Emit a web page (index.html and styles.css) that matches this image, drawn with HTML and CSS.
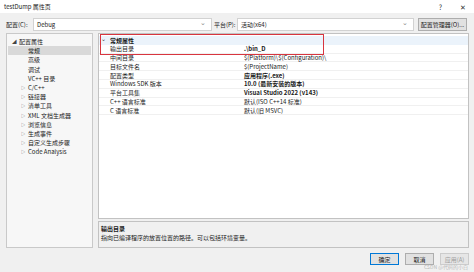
FILE: index.html
```html
<!DOCTYPE html>
<html>
<head>
<meta charset="utf-8">
<link rel="stylesheet" href="styles.css">
</head>
<body>
<div class="win">
  <div class="titlebar">
    <span class="title">testDump 属性页</span>
    <span class="tb-btns"><span class="help">?</span><span class="close">✕</span></span>
  </div>
  <div class="toolbar">
    <span class="lbl">配置(C):</span>
    <div class="combo combo-cfg"><span>Debug</span><span class="arrow">⌄</span></div>
    <span class="lbl lbl-plat">平台(P):</span>
    <div class="combo combo-plat"><span>活动(x64)</span><span class="arrow">⌄</span></div>
    <div class="btn btn-mgr">配置管理器(O)...</div>
  </div>
  <div class="main">
    <div class="tree">
      <div class="node lvl0"><span class="tri open">◢</span>配置属性</div>
      <div class="node lvl1 sel">常规</div>
      <div class="node lvl1">高级</div>
      <div class="node lvl1">调试</div>
      <div class="node lvl1">VC++ 目录</div>
      <div class="node lvl1c"><span class="tri">▷</span>C/C++</div>
      <div class="node lvl1c"><span class="tri">▷</span>链接器</div>
      <div class="node lvl1c"><span class="tri">▷</span>清单工具</div>
      <div class="node lvl1c"><span class="tri">▷</span>XML 文档生成器</div>
      <div class="node lvl1c"><span class="tri">▷</span>浏览信息</div>
      <div class="node lvl1c"><span class="tri">▷</span>生成事件</div>
      <div class="node lvl1c"><span class="tri">▷</span>自定义生成步骤</div>
      <div class="node lvl1c"><span class="tri">▷</span>Code Analysis</div>
    </div>
    <div class="right">
      <div class="grid">
        <div class="row head"><span class="chev">⌄</span><span class="name">常规属性</span></div>
        <div class="row"><span class="name">输出目录</span><span class="val b">.\bin_D</span></div>
        <div class="row"><span class="name">中间目录</span><span class="val">$(Platform)\$(Configuration)\</span></div>
        <div class="row"><span class="name">目标文件名</span><span class="val">$(ProjectName)</span></div>
        <div class="row"><span class="name">配置类型</span><span class="val b">应用程序(.exe)</span></div>
        <div class="row"><span class="name">Windows SDK 版本</span><span class="val b">10.0 (最新安装的版本)</span></div>
        <div class="row"><span class="name">平台工具集</span><span class="val b">Visual Studio 2022 (v143)</span></div>
        <div class="row"><span class="name">C++ 语言标准</span><span class="val">默认(ISO C++14 标准)</span></div>
        <div class="row"><span class="name">C 语言标准</span><span class="val">默认(旧 MSVC)</span></div>
        <div class="redbox"></div>
      </div>
      <div class="desc">
        <div class="desc-title">输出目录</div>
        <div class="desc-text">指向已编译程序的放置位置的路径。可以包括环境变量。</div>
      </div>
    </div>
  </div>
  <div class="footer">
    <div class="btn btn-ok">确定</div>
    <div class="btn">取消</div>
    <div class="btn disabled">应用(A)</div>
    <span class="wm">CSDN @代码的小白</span>
  </div>
</div>
</body>
</html>
```
FILE: styles.css
```css
* { box-sizing: border-box; }
html, body { margin: 0; padding: 0; }
body {
  width: 474px; height: 272px; overflow: hidden;
  background: #f0f0f0;
  font-family: "Noto Sans CJK SC", "Noto Sans", sans-serif;
  font-size: 6px; color: #1a1a1a;
}
.win { width: 474px; height: 272px; display: flex; flex-direction: column; }
.titlebar {
  height: 13px; background: #ffffff; display: flex; align-items: center;
  justify-content: space-between; padding: 0 8px 0 4px;
}
.title { font-size: 6px; color: #222; }
.tb-btns { display: flex; gap: 18px; font-size: 7px; color: #333; }
.toolbar {
  display: flex; align-items: center; height: 14px; margin-top: 4px; padding-left: 6px;
  white-space: nowrap;
}
.lbl { width: 27px; white-space: nowrap; }
.lbl-plat { margin-left: 2px; width: 23px; }
.combo {
  height: 13px; background: #fff; border: 1px solid #d2d2d2;
  display: flex; align-items: center; justify-content: space-between; padding: 0 5px 0 3px;
}
.combo-cfg { width: 179px; }
.combo-plat { width: 177px; }
.arrow { font-size: 7px; color: #888; line-height: 7px; margin-top: -3px; }
.btn {
  height: 13px; background: #e1e1e1; border: 1px solid #adadad;
  display: flex; align-items: center; justify-content: center; font-size: 6px; white-space: nowrap;
}
.btn-mgr { width: 49px; margin-left: 4px; }
.main { display: flex; gap: 5px; margin-top: 2px; padding-left: 6px; height: 215px; }
.tree {
  width: 87px; background: #f7f7f7; border: 1px solid #c9c9c9; padding-top: 3px;
}
.node { height: 9.2px; line-height: 9.2px; white-space: nowrap; display: flex; align-items: center; }
.tri { font-size: 4.5px; width: 7px; color: #555; }
.tri.open { color: #444; }
.lvl0 { padding-left: 5px; }
.lvl1 { padding-left: 21px; }
.lvl1c { padding-left: 14px; }
.sel { background: #d9d9d9; margin: 0 1px; padding-left: 20px; }
.right { width: 371px; display: flex; flex-direction: column; gap: 2px; }
.grid {
  position: relative; height: 186px; background: #fff; border: 1px solid #c2c2c2; padding-top: 2px;
}
.row {
  height: 8.8px; display: flex; align-items: center; border-bottom: 1px solid #f0f0f0; white-space: nowrap;
}
.row.head { background: #ebf3fb; border-bottom: none; }
.chev { width: 11px; padding-left: 2px; font-size: 6px; color: #444; margin-top: -3px; }
.name { width: 145px; padding-left: 11px; }
.head .name { padding-left: 0; font-weight: bold; }
.b { font-weight: bold; }
.redbox {
  position: absolute; left: 1px; top: 0px; width: 224px; height: 21px;
  border: 1.5px solid #d8353f;
}
.desc {
  height: 27px; background: #f0f0f0; border: 1px solid #c2c2c2; padding: 2px 2px;
}
.desc-title { font-weight: bold; height: 9px; line-height: 9px; }
.desc-text { height: 9px; line-height: 9px; }
.footer {
  position: relative; display: flex; justify-content: flex-end; gap: 6px;
  margin-top: 5px; padding-right: 5px;
}
.footer .btn { width: 29px; height: 12px; }
.footer .btn-ok { border: 1px solid #0078d7; }
.footer .disabled { color: #9c9c9c; background: #e6e6e6; border-color: #cccccc; }
.wm {
  position: absolute; right: 6px; top: 11px; font-size: 5px; line-height: 6px; color: rgba(120,120,120,0.5);
}
```
